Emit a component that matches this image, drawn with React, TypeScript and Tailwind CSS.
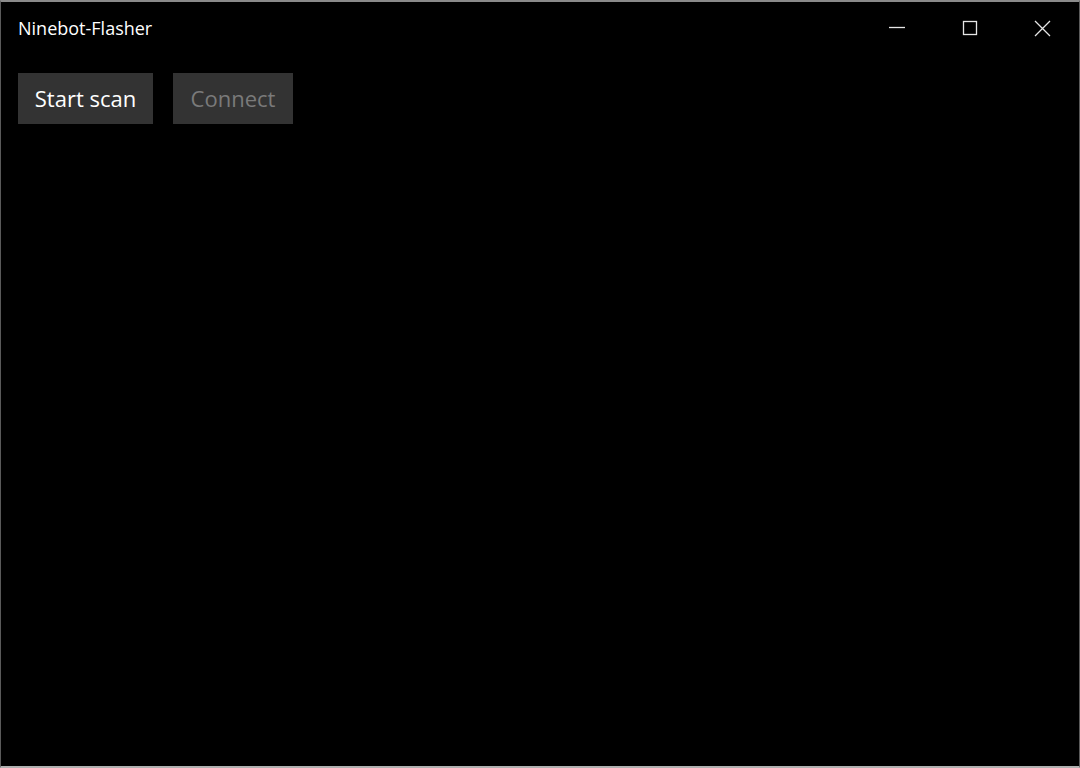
import type { ReactElement } from 'react';

const font = { fontFamily: '"Segoe UI", "Open Sans", "Noto Sans", sans-serif' };

const Minimize = (): ReactElement => (
  <svg width="16" height="16" viewBox="0 0 16 16" aria-hidden>
    <path d="M0 7.5h16" stroke="#e6e6e6" strokeWidth="1.3" />
  </svg>
);

const Maximize = (): ReactElement => (
  <svg width="16" height="16" viewBox="0 0 16 16" aria-hidden>
    <rect x="1.5" y="1.5" width="13" height="13" fill="none" stroke="#e6e6e6" strokeWidth="1.3" />
  </svg>
);

const Close = (): ReactElement => (
  <svg width="17" height="17" viewBox="0 0 17 17" aria-hidden>
    <path d="M1 1l15 15M16 1L1 16" stroke="#e6e6e6" strokeWidth="1.3" />
  </svg>
);

export default function App(): ReactElement {
  return (
    <div
      className="flex h-[768px] w-[1080px] flex-col overflow-hidden border-x border-t-2 border-b-2 border-x-[#5a5a5a] border-t-[#8a8a8a] border-b-[#b0b0b0] bg-black"
      style={font}
    >
      <div className="flex h-[54px] items-center justify-between">
        <span className="pl-[17px] pb-[2px] text-[18px] text-white">Ninebot-Flasher</span>
        <div className="flex h-full items-center pb-[2px] pr-[1px]">
          <button className="flex h-full w-[72px] items-center justify-center pr-[3px]">
            <Minimize />
          </button>
          <button className="flex h-full w-[72px] items-center justify-center">
            <Maximize />
          </button>
          <button className="flex h-full w-[72px] items-center justify-center">
            <Close />
          </button>
        </div>
      </div>
      <div className="flex gap-[20px] pl-[17px] pt-[17px]">
        <button className="flex h-[51px] w-[135px] items-center justify-center bg-[#333333] text-[22px] text-white">
          Start scan
        </button>
        <button className="flex h-[51px] w-[120px] items-center justify-center bg-[#333333] text-[22px] text-[#7a7a7a]">
          Connect
        </button>
      </div>
    </div>
  );
}
